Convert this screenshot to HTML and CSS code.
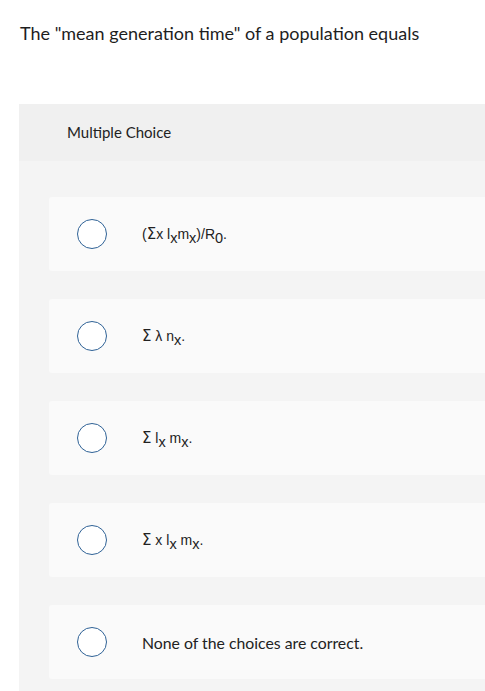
FILE: index.html
```html
<!DOCTYPE html>
<html>
<head>
<meta charset="utf-8">
<link rel="stylesheet" href="styles.css">
</head>
<body>
<div class="page">
  <p class="question">The "mean generation time" of a population equals</p>
  <div class="mc">
    <div class="mc-head">Multiple Choice</div>
    <div class="mc-body">
      <div class="choice"><span class="radio"></span><span class="math">(<span class="sig">&Sigma;</span>x l<sub>x</sub>m<sub>x</sub>)/R<sub>0</sub>.</span></div>
      <div class="choice"><span class="radio"></span><span class="math"><span class="sig">&Sigma;</span> &lambda; n<sub>x</sub>.</span></div>
      <div class="choice"><span class="radio"></span><span class="math"><span class="sig">&Sigma;</span> l<sub>x</sub> m<sub>x</sub>.</span></div>
      <div class="choice"><span class="radio"></span><span class="math"><span class="sig">&Sigma;</span> x l<sub>x</sub> m<sub>x</sub>.</span></div>
      <div class="choice"><span class="radio"></span><span class="text">None of the choices are correct.</span></div>
    </div>
  </div>
</div>
</body>
</html>
```

FILE: styles.css
```css
html, body {
  margin: 0;
  padding: 0;
  overflow: hidden;
  background: #ffffff;
}
.page {
  padding: 21px 0 0 19px;
  font-family: Lato, "Liberation Sans", sans-serif;
  color: #222;
}
.question {
  margin: 0 0 59px 1px;
  font-size: 18px;
  line-height: 24px;
  color: #1e1e1e;
}
.mc {
  width: 520px;
  background: #f4f4f4;
  padding-bottom: 30px;
}
.mc-head {
  background: #f0f0f0;
  height: 57px;
  box-sizing: border-box;
  padding: 19px 0 0 48px;
  font-size: 15px;
  color: #222;
}
.mc-body {
  padding: 36px 0 0 30px;
  display: flex;
  flex-direction: column;
  gap: 28px;
}
.choice {
  background: #fafafa;
  height: 74px;
  border-radius: 3px 0 0 3px;
  display: flex;
  align-items: center;
  padding-left: 28px;
}
.radio {
  width: 28px;
  height: 28px;
  border: 1.6px solid #2f6296;
  border-radius: 50%;
  background: #fff;
  flex: none;
}
.math, .text {
  margin-left: 35px;
  font-size: 14px;
  color: #222;
}
.math {
  font-family: "Liberation Sans", Arial, sans-serif;
}
.math .sig {
  font-family: "DejaVu Sans", sans-serif;
  font-size: 15px;
  line-height: 0;
}
.math sub {
  font-size: 14.5px;
  vertical-align: -4px;
  line-height: 0;
}
.text {
  font-size: 15.8px;
}
```
